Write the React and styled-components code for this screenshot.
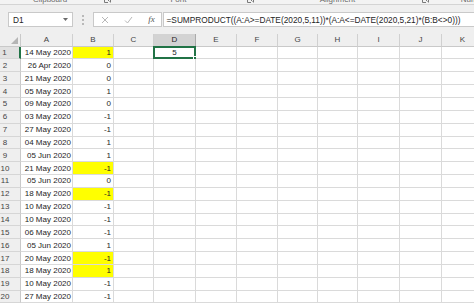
import React from 'react'
import styled, { createGlobalStyle, css } from 'styled-components'

const GlobalStyle = createGlobalStyle`
  html, body {
    margin: 0;
    padding: 0;
    background: #ffffff;
  }
  body {
    font-family: 'Liberation Sans', Arial, sans-serif;
  }
`

const COLUMNS = ['A', 'B', 'C', 'D', 'E', 'F', 'G', 'H', 'I', 'J', 'K']

const ROWS = [
  ['14 May 2020', '1', true],
  ['26 Apr 2020', '0'],
  ['21 May 2020', '0'],
  ['05 May 2020', '1'],
  ['09 May 2020', '0'],
  ['03 May 2020', '-1'],
  ['27 May 2020', '-1'],
  ['04 May 2020', '1'],
  ['05 Jun 2020', '1'],
  ['21 May 2020', '-1', true],
  ['05 Jun 2020', '0'],
  ['18 May 2020', '-1', true],
  ['10 May 2020', '-1'],
  ['10 May 2020', '-1'],
  ['06 May 2020', '-1'],
  ['05 Jun 2020', '1'],
  ['20 May 2020', '-1', true],
  ['18 May 2020', '1', true],
  ['10 May 2020', '-1'],
  ['27 May 2020', '-1'],
]

const RIBBON_GROUPS = [
  { label: 'Clipboard', w: 114 },
  { label: 'Font', w: 143 },
  { label: 'Alignment', w: 175 },
  { label: 'Number', w: 100 },
]

const FORMULA = '=SUMPRODUCT((A:A>=DATE(2020,5,11))*(A:A<=DATE(2020,5,21)*(B:B<>0)))'

const Window = styled.div`
  width: 474px;
  height: 304px;
  overflow: hidden;
  display: flex;
  flex-direction: column;
  background: #ffffff;
`

const Ribbon = styled.div`
  flex: none;
  height: 4px;
  display: flex;
  overflow: hidden;
  background: #f3f3f3;
  border-bottom: 1px solid #d4d4d4;
`

const RibbonGroup = styled.div`
  flex: none;
  width: ${p => p.$w}px;
  display: flex;
  align-items: flex-start;
`

const GroupLabel = styled.span`
  flex: 1;
  text-align: center;
  font-size: 8px;
  line-height: 8px;
  margin-top: -4.5px;
  color: #6b6b6b;
  white-space: nowrap;
`

const Launcher = styled.span`
  flex: none;
  width: 14px;
  display: flex;
  justify-content: center;
  margin-top: -4px;
`

const FormulaBar = styled.div`
  flex: none;
  height: 29px;
  box-sizing: border-box;
  padding-top: 7px;
  display: flex;
  align-items: flex-start;
  background: #efefef;
`

const boxStyle = css`
  height: 15px;
  box-sizing: border-box;
  background: #ffffff;
  border: 1px solid #c9c9c9;
`

const NameBox = styled.div`
  ${boxStyle};
  margin-left: 8px;
  width: 65px;
  display: flex;
  align-items: center;
  padding: 0 4px 0 4px;
  font-size: 8.3px;
  color: #262626;
`

const NameText = styled.span`
  flex: 1;
`

const Grip = styled.div`
  flex: none;
  width: 20px;
  height: 15px;
  display: flex;
  align-items: center;
  justify-content: center;
`

const FnBox = styled.div`
  ${boxStyle};
  flex: none;
  width: 69px;
  display: grid;
  grid-template-columns: 21px 27px 1fr;
  align-items: center;
  justify-items: center;
`

const FxLabel = styled.span`
  font-family: 'Liberation Serif', 'Times New Roman', serif;
  font-style: italic;
  font-size: 9px;
  line-height: 9px;
  color: #555555;
`

const FormulaBox = styled.div`
  ${boxStyle};
  flex: 1;
  margin-left: 1px;
  border-right: none;
  padding-left: 2.5px;
  display: flex;
  align-items: center;
  font-size: 8.3px;
  color: #262626;
  white-space: nowrap;
  overflow: hidden;
`

const Sheet = styled.div`
  flex: 1;
  display: grid;
  grid-template-columns: 21px 52px 41px 40px 42px 41px 41px 40px 40px 42px 42px 42px;
  grid-template-rows: 12.6px;
  grid-auto-rows: 12.85px;
  font-size: 8px;
  color: #1e1e1e;
  background: #ffffff;
`

const Corner = styled.div`
  box-sizing: border-box;
  background: #efefef;
  border-right: 1px solid #c9c9c9;
  border-bottom: 1px solid #c9c9c9;
  display: flex;
  align-items: flex-end;
  justify-content: flex-end;
  padding: 0 2px 2px 0;
`

const ColHeader = styled.div`
  box-sizing: border-box;
  display: flex;
  align-items: center;
  justify-content: center;
  background: ${p => (p.$active ? '#d3d3d3' : '#efefef')};
  color: ${p => (p.$active ? '#1f1f1f' : '#444444')};
  border-right: 1px solid ${p => (p.$active ? '#ababab' : '#d0d0d0')};
  border-bottom: 1px solid ${p => (p.$active ? '#217346' : '#c9c9c9')};
`

const RowHeader = styled.div`
  box-sizing: border-box;
  display: flex;
  align-items: center;
  justify-content: center;
  padding-right: 10px;
  background: ${p => (p.$active ? '#e1e1e1' : '#efefef')};
  color: #444444;
  border-right: ${p => (p.$active ? '2px solid #217346' : '1px solid #c9c9c9')};
  border-bottom: 1px solid #d6d6d6;
`

const Cell = styled.div`
  position: relative;
  box-sizing: border-box;
  display: flex;
  align-items: center;
  justify-content: ${p => p.$align || 'flex-start'};
  padding: 0 ${p => p.$pad ?? 2}px 0 2px;
  background: ${p => (p.$fill ? '#ffff00' : '#ffffff')};
  border-right: 1px solid #dadada;
  border-bottom: 1px solid #dadada;
  white-space: nowrap;
`

const Selection = styled.span`
  position: absolute;
  left: -1px;
  top: -1px;
  right: -1px;
  bottom: -1px;
  border: 2px solid #217346;
  pointer-events: none;
`

const Handle = styled.span`
  position: absolute;
  right: -3px;
  bottom: -3px;
  width: 5px;
  height: 5px;
  box-sizing: border-box;
  background: #217346;
  border: 1px solid #ffffff;
`

const LauncherIcon = () => (
  <svg width="7" height="7" viewBox="0 0 7 7">
    <path d="M0.5 3 V6.5 H4 M0.5 0.5 H6.5 V6.5 M2.5 2.5 L5.5 5.5" stroke="#7a7a7a" strokeWidth="1" fill="none" />
  </svg>
)

const DropArrow = () => (
  <svg width="5" height="3" viewBox="0 0 5 3">
    <path d="M0 0 H5 L2.5 3 Z" fill="#6a6a6a" />
  </svg>
)

const GripDots = () => (
  <svg width="2" height="10" viewBox="0 0 2 10">
    <rect x="0" y="0" width="2" height="2" fill="#b9b9b9" />
    <rect x="0" y="4" width="2" height="2" fill="#b9b9b9" />
    <rect x="0" y="8" width="2" height="2" fill="#b9b9b9" />
  </svg>
)

const CancelIcon = () => (
  <svg width="8" height="8" viewBox="0 0 8 8">
    <path d="M1 1 L7 7 M7 1 L1 7" stroke="#b8b8b8" strokeWidth="1" fill="none" />
  </svg>
)

const EnterIcon = () => (
  <svg width="9" height="8" viewBox="0 0 9 8">
    <path d="M1 4.5 L3.5 7 L8 1" stroke="#b8b8b8" strokeWidth="1" fill="none" />
  </svg>
)

const CornerTriangle = () => (
  <svg width="7" height="7" viewBox="0 0 7 7">
    <path d="M7 0 V7 H0 Z" fill="#b5b5b5" />
  </svg>
)

const RibbonStrip = () => (
  <Ribbon>
    {RIBBON_GROUPS.map(g => (
      <RibbonGroup key={g.label} $w={g.w}>
        <GroupLabel>{g.label}</GroupLabel>
        <Launcher><LauncherIcon /></Launcher>
      </RibbonGroup>
    ))}
  </Ribbon>
)

const Formula = () => (
  <FormulaBar>
    <NameBox>
      <NameText>D1</NameText>
      <DropArrow />
    </NameBox>
    <Grip><GripDots /></Grip>
    <FnBox>
      <CancelIcon />
      <EnterIcon />
      <FxLabel>fx</FxLabel>
    </FnBox>
    <FormulaBox>{FORMULA}</FormulaBox>
  </FormulaBar>
)

const DataRow = ({ row, idx }) => {
  const [date, value, fill] = row
  const first = idx === 0
  return (
    <>
      <RowHeader $active={first}>{idx + 1}</RowHeader>
      <Cell $align='flex-end' $pad={1}>{date}</Cell>
      <Cell $align='flex-end' $fill={fill}>{value}</Cell>
      <Cell />
      {first ? (
        <Cell $align='center'>
          5
          <Selection />
          <Handle />
        </Cell>
      ) : <Cell />}
      {COLUMNS.slice(4).map(c => <Cell key={c} />)}
    </>
  )
}

const Grid = () => (
  <Sheet>
    <Corner><CornerTriangle /></Corner>
    {COLUMNS.map(c => (
      <ColHeader key={c} $active={c === 'D'}>{c}</ColHeader>
    ))}
    {ROWS.map((row, idx) => <DataRow key={idx} row={row} idx={idx} />)}
  </Sheet>
)

export default function App () {
  return (
    <Window>
      <GlobalStyle />
      <RibbonStrip />
      <Formula />
      <Grid />
    </Window>
  )
}
